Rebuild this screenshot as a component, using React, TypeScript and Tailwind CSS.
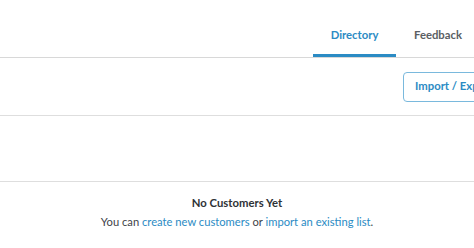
export default function App() {
  return (
    <div
      className="w-[474px] h-[248px] overflow-hidden bg-white text-[#3e4348]"
      style={{ fontFamily: 'Lato, "Open Sans", "Liberation Sans", sans-serif' }}
    >
      {/* tabs */}
      <div className="h-[58px] border-b border-[#d8d8d8] flex justify-end items-end">
        <div className="flex items-end">
          <div className="w-[83px] h-[58px] flex flex-col items-center">
            <div className="flex-1 flex items-center pt-[18px] text-[11.3px] font-bold text-[#2b8bc4]">
              Directory
            </div>
            <div className="w-full h-[3px] bg-[#2b8bc4]" />
          </div>
          <div className="w-[78px] h-[58px] flex items-center justify-center pt-[15px] pl-[6px] text-[11.3px] font-bold text-[#5a5e63]">
            Feedback
          </div>
        </div>
      </div>

      {/* actions */}
      <div className="h-[58px] border-b border-[#dedede] flex items-center overflow-hidden">
        <button className="h-[30px] ml-[403px] shrink-0 rounded-[4px] border border-[#7ab9dd] px-[11px] text-[11.3px] font-bold text-[#2b8bc4] whitespace-nowrap">
          Import / Export
        </button>
      </div>

      {/* table header space */}
      <div className="h-[66px] border-b border-[#dedede]" />

      {/* empty state */}
      <div className="flex flex-col items-center pt-[13px]">
        <div className="text-[11.3px] font-bold text-[#2e3236]">No Customers Yet</div>
        <div className="mt-[2px] text-[11.2px] text-[#3e4348]">
          You can <span className="text-[#2b8bc4]">create new customers</span> or{' '}
          <span className="text-[#2b8bc4]">import an existing list</span>.
        </div>
      </div>
    </div>
  );
}
